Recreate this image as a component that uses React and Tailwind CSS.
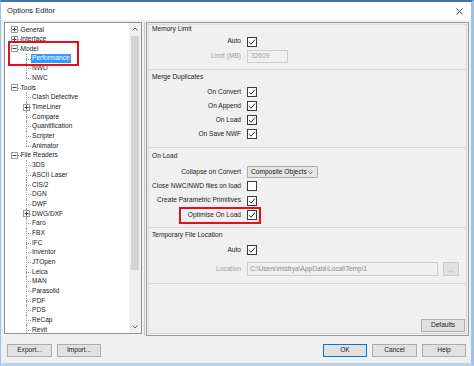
import React from "react";

const FONT = "font-['Liberation_Sans',Arial,sans-serif]";

function Check({ checked = true }) {
  return (
    <svg width="10" height="10" viewBox="0 0 10 10" className="block shrink-0">
      <rect x="0.5" y="0.5" width="9" height="9" fill="#ffffff" stroke="#3a3a3a" />
      {checked && <path d="M2 5.2 L4 7.2 L8 2.6" fill="none" stroke="#2a2a2a" strokeWidth="1" />}
    </svg>
  );
}

function Expander({ plus }) {
  return (
    <svg width="7" height="7" viewBox="0 0 7 7" className="block">
      <rect x="0.5" y="0.5" width="6" height="6" fill="#ffffff" stroke="#9a9a9a" />
      <line x1="1.5" y1="3.5" x2="5.5" y2="3.5" stroke="#404040" />
      {plus && <line x1="3.5" y1="1.5" x2="3.5" y2="5.5" stroke="#404040" />}
    </svg>
  );
}

const tree = [
  { t: "General", l: 0, e: "+" },
  { t: "Interface", l: 0, e: "+" },
  { t: "Model", l: 0, e: "-" },
  { t: "Performance", l: 1, sel: true },
  { t: "NWD", l: 1 },
  { t: "NWC", l: 1, last: true },
  { t: "Tools", l: 0, e: "-" },
  { t: "Clash Detective", l: 1 },
  { t: "TimeLiner", l: 1, e: "+" },
  { t: "Compare", l: 1 },
  { t: "Quantification", l: 1 },
  { t: "Scripter", l: 1 },
  { t: "Animator", l: 1, last: true },
  { t: "File Readers", l: 0, e: "-" },
  { t: "3DS", l: 1 },
  { t: "ASCII Laser", l: 1 },
  { t: "CIS/2", l: 1 },
  { t: "DGN", l: 1 },
  { t: "DWF", l: 1 },
  { t: "DWG/DXF", l: 1, e: "+" },
  { t: "Faro", l: 1 },
  { t: "FBX", l: 1 },
  { t: "IFC", l: 1 },
  { t: "Inventor", l: 1 },
  { t: "JTOpen", l: 1 },
  { t: "Leica", l: 1 },
  { t: "MAN", l: 1 },
  { t: "Parasolid", l: 1 },
  { t: "PDF", l: 1 },
  { t: "PDS", l: 1 },
  { t: "ReCap", l: 1 },
  { t: "Revit", l: 1 },
];

function TreeRow({ item }) {
  if (item.l === 0) {
    return (
      <div className="relative h-[9.7px] shrink-0">
        <div className="absolute left-[6px] top-[1.5px]">
          <Expander plus={item.e === "+"} />
        </div>
        <div className="absolute left-[13px] top-[5px] w-[3px] border-t border-dotted border-[#9a9a9a]" />
        <span className="absolute left-[15.5px] top-0 leading-[9.7px] text-[#1a1a1a] whitespace-nowrap">{item.t}</span>
      </div>
    );
  }
  return (
    <div className="relative h-[9.7px] shrink-0">
      <div className={item.last ? "absolute left-[21px] top-0 h-[5px] border-l border-dotted border-[#9a9a9a]" : "absolute left-[21px] top-0 h-full border-l border-dotted border-[#9a9a9a]"} />
      <div className="absolute left-[21px] top-[5px] w-[5px] border-t border-dotted border-[#9a9a9a]" />
      {item.e && (
        <div className="absolute left-[18px] top-[1.5px]">
          <Expander plus />
        </div>
      )}
      {item.sel ? (
        <span className="absolute left-[26px] top-[0.5px] h-[8.6px] leading-[8.6px] px-[1px] bg-[#3399ff] text-white whitespace-nowrap">{item.t}</span>
      ) : (
        <span className="absolute left-[27px] top-0 leading-[9.7px] text-[#1a1a1a] whitespace-nowrap">{item.t}</span>
      )}
    </div>
  );
}

function Row({ label, h, children, gray, extra }) {
  return (
    <div className={"relative flex items-center shrink-0 " + h}>
      <div className={gray ? "w-[92px] text-right text-[#a0a0a0] whitespace-nowrap" : "w-[92px] text-right text-[#1a1a1a] whitespace-nowrap"}>{label}</div>
      <div className="ml-[6px] flex items-center">{children}</div>
      {extra}
    </div>
  );
}

function Btn({ children, w, def }) {
  return (
    <div
      className={
        (def ? "border-[#0078d7] " : "border-[#adadad] ") +
        "h-[13px] flex items-center justify-center border bg-[#e1e1e1] text-[#1a1a1a] " +
        w
      }
    >
      {children}
    </div>
  );
}

export default function App() {
  return (
    <div
      className={
        FONT +
        " w-[474px] h-[366px] overflow-hidden flex flex-col bg-[#f0f0f0] text-[6.6px] leading-none border-t-2 border-t-[#3b76b3] border-r-[3px] border-r-[#9ec3e6] border-b-[3px] border-b-[#b7d4ef] border-l border-l-[#9ec3e6]"
      }
    >
      {/* title bar */}
      <div className="h-[18px] shrink-0 bg-white flex items-center pl-[6px] pr-[8px]">
        <span className="text-[7.6px] text-[#1a1a1a]">Options Editor</span>
        <div className="flex-1" />
        <svg width="7" height="7" viewBox="0 0 7 7">
          <path d="M0.5 0.5 L6.5 6.5 M6.5 0.5 L0.5 6.5" stroke="#333" strokeWidth="0.9" />
        </svg>
      </div>

      {/* body */}
      <div className="flex mt-[2px] ml-[3px] h-[314px] shrink-0">
        {/* tree */}
        <div className="relative w-[138px] h-[312px] border border-[#8e9299] bg-white flex">
          <div className="flex-1 overflow-hidden flex flex-col pt-[1.5px]">
            {tree.map((it, i) => (
              <TreeRow key={i} item={it} />
            ))}
          </div>
          <div className="w-[12px] bg-[#f0f0f0] flex flex-col items-stretch">
            <div className="h-[12px] flex items-center justify-center">
              <svg width="6" height="4" viewBox="0 0 6 4">
                <path d="M0.5 3.5 L3 1 L5.5 3.5" fill="none" stroke="#606060" strokeWidth="1" />
              </svg>
            </div>
            <div className="mt-[1px] mx-[2px] h-[234px] bg-[#d3d3d3]" />
            <div className="flex-1" />
            <div className="h-[12px] flex items-center justify-center">
              <svg width="6" height="4" viewBox="0 0 6 4">
                <path d="M0.5 0.5 L3 3 L5.5 0.5" fill="none" stroke="#606060" strokeWidth="1" />
              </svg>
            </div>
          </div>
          <div className="absolute left-[3px] top-[18px] w-[71px] h-[25px] border-2 border-[#e3101c]" />
        </div>

        {/* splitter */}
        <div className="w-[4px] flex justify-center">
          <div className="w-[1px] h-full bg-[#c8c8c8]" />
        </div>

        {/* right panel */}
        <div className="w-[323px] h-[314px] border border-[#9a9a9a] p-[1px]">
          <div className="h-full border border-[#dadada] flex flex-col">
            {/* Memory Limit */}
            <div className="flex flex-col">
              <div className="h-[9px] flex items-center pl-[3px] text-[#1a1a1a]">Memory Limit</div>
              <Row label="Auto" h="h-[15px]">
                <Check />
              </Row>
              <Row label="Limit (MB)" h="h-[15px]" gray>
                <div className="w-[41px] h-[13px] border border-[#cccccc] bg-[#f0f0f0] flex items-center pl-[3px] text-[#a0a0a0]">32609</div>
              </Row>
              <div className="h-[5px]" />
            </div>

            {/* Merge Duplicates */}
            <div className="flex flex-col border-t border-[#d9d9d9]">
              <div className="h-[15px] flex items-center pl-[3px] text-[#1a1a1a]">Merge Duplicates</div>
              <Row label="On Convert" h="h-[14px]"><Check /></Row>
              <Row label="On Append" h="h-[14px]"><Check /></Row>
              <Row label="On Load" h="h-[14px]"><Check /></Row>
              <Row label="On Save NWF" h="h-[14px]"><Check /></Row>
              <div className="h-[6px]" />
            </div>

            {/* On Load */}
            <div className="flex flex-col border-t border-[#d9d9d9]">
              <div className="h-[17px] flex items-center pl-[3px] text-[#1a1a1a]">On Load</div>
              <Row label="Collapse on Convert" h="h-[14.3px]">
                <div className="w-[71px] h-[12px] border border-[#acacac] bg-[#e5e5e5] flex items-center pl-[3px] pr-[4px] text-[#1a1a1a]">
                  <span className="flex-1 whitespace-nowrap">Composite Objects</span>
                  <svg width="5" height="3" viewBox="0 0 5 3">
                    <path d="M0.5 0.5 L2.5 2.5 L4.5 0.5" fill="none" stroke="#505050" strokeWidth="0.8" />
                  </svg>
                </div>
              </Row>
              <Row label="Close NWC/NWD files on load" h="h-[14.3px]"><Check checked={false} /></Row>
              <Row label="Create Parametric Primitives" h="h-[14.3px]"><Check /></Row>
              <Row
                label="Optimise On Load"
                h="h-[14.3px]"
                extra={<div className="absolute left-[30px] top-[-1px] w-[82px] h-[17px] border-2 border-[#e3101c]" />}
              >
                <Check />
              </Row>
              <div className="h-[5px]" />
            </div>

            {/* Temporary File Location */}
            <div className="flex flex-col border-t border-b border-[#d9d9d9]">
              <div className="h-[15px] flex items-center pl-[3px] text-[#1a1a1a]">Temporary File Location</div>
              <Row label="Auto" h="h-[14px]"><Check /></Row>
              <Row label="Location" h="h-[16px] mt-[4px]" gray>
                <div className="w-[191px] h-[14px] border border-[#cccccc] bg-[#f0f0f0] flex items-center pl-[2px] text-[#8a8a8a] whitespace-nowrap">
                  C:\Users\mistrya\AppData\Local\Temp\1
                </div>
                <div className="ml-[5px] w-[16px] h-[14px] border border-[#cccccc] bg-[#e0e0e0] flex items-end justify-center pb-[2px] text-[#a0a0a0]">...</div>
              </Row>
              <div className="h-[6px]" />
            </div>

            <div className="flex-1" />
            <div className="flex justify-end pr-[1px] pb-[1px]">
              <Btn w="w-[44px] h-[13px]">Defaults</Btn>
            </div>
          </div>
        </div>
      </div>

      {/* bottom buttons */}
      <div className="mt-[8px] flex items-center pl-[6px] pr-[5px]">
        <Btn w="w-[45px]">Export...</Btn>
        <div className="w-[5px]" />
        <Btn w="w-[44px]">Import...</Btn>
        <div className="flex-1" />
        <Btn w="w-[44px]" def>OK</Btn>
        <div className="w-[5px]" />
        <Btn w="w-[45px]">Cancel</Btn>
        <div className="w-[5px]" />
        <Btn w="w-[44px]">Help</Btn>
      </div>
    </div>
  );
}
